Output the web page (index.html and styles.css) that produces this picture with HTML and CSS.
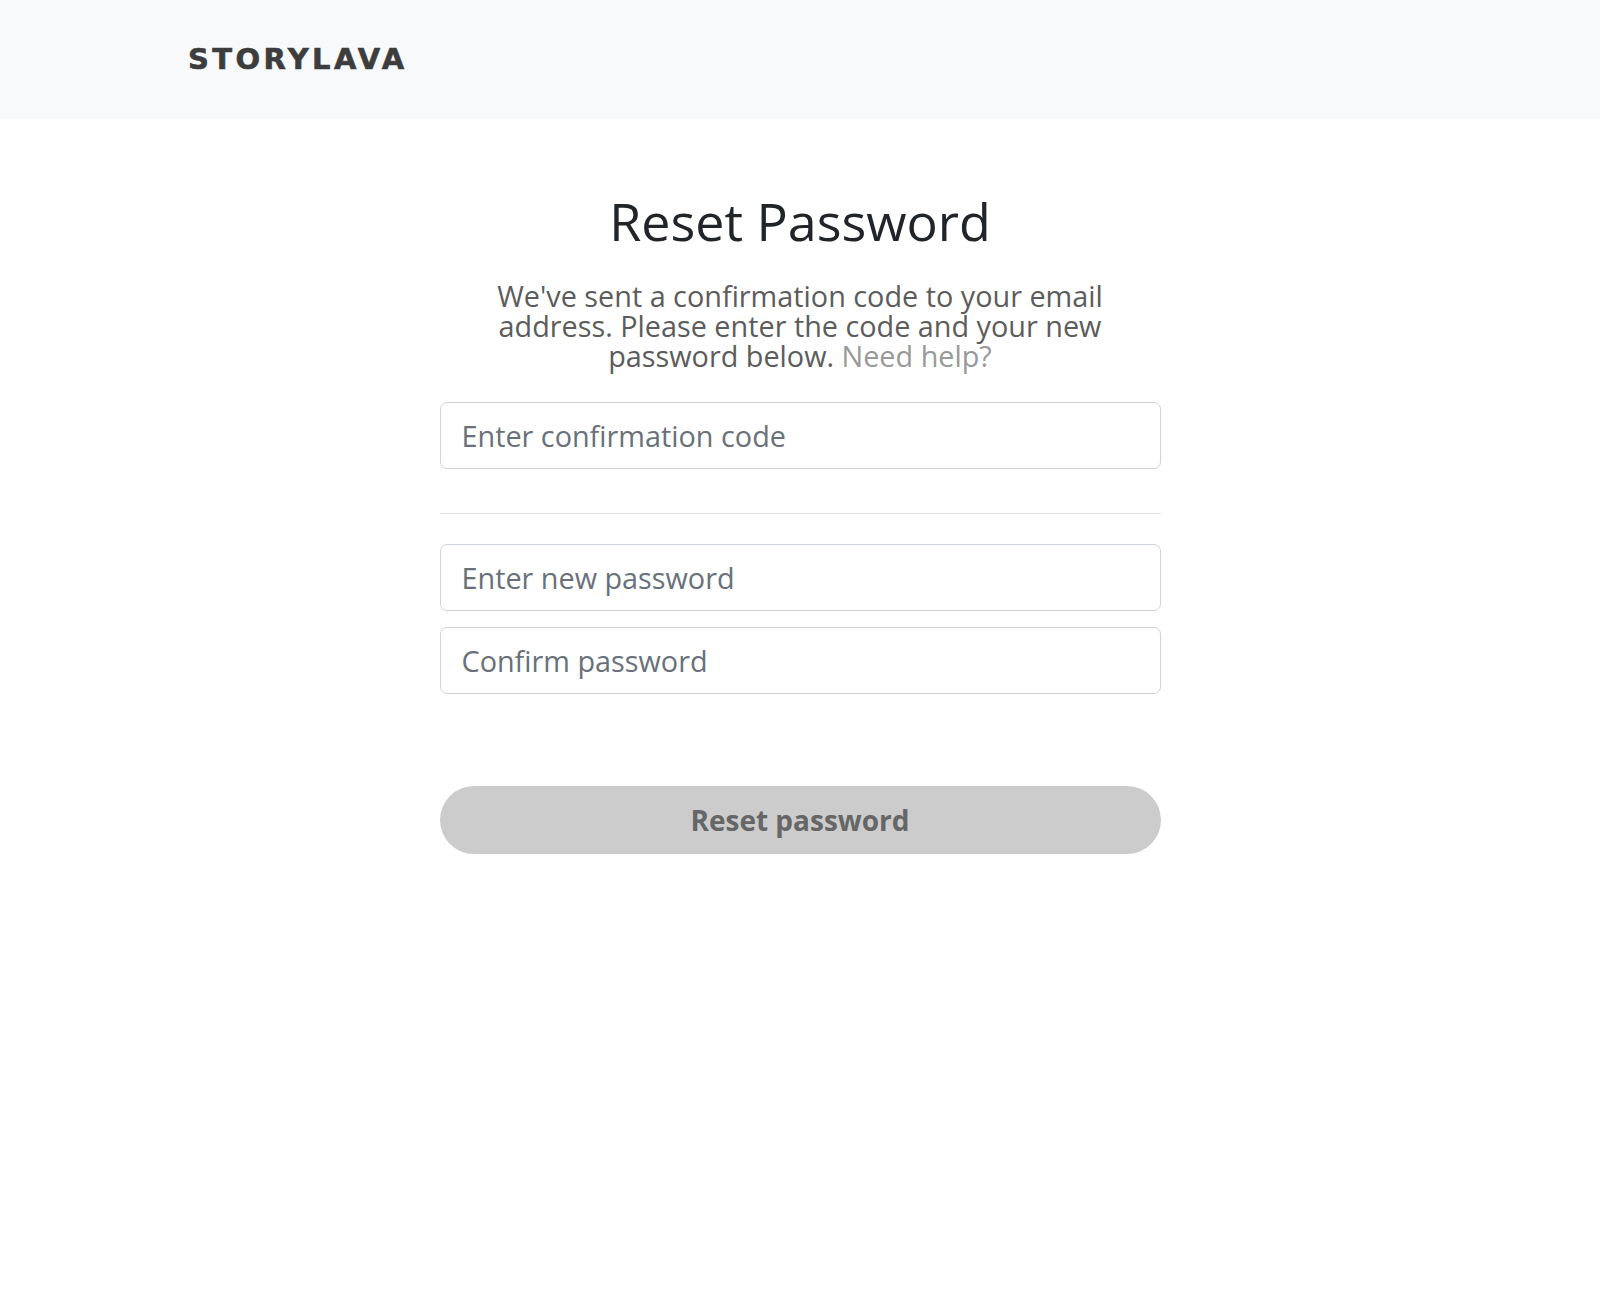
FILE: index.html
```html
<!DOCTYPE html>
<html>
	<head>
		<title>Reset Password - Storylava</title>
		<link rel="stylesheet" href="styles.css">
	</head>
	<body>
		<div class="topbar">
			<div class="logo">STORYLAVA</div>
		</div>

		<div class="box">
			<h1 class="titolo">Reset Password</h1>
			<p class="intro">We've sent a confirmation code to your email address. Please enter the code and your new password below. <a href="#" class="aiuto">Need help?</a></p>

			<input class="campo" type="text" placeholder="Enter confirmation code">
			<hr class="divisore">
			<input class="campo" type="password" placeholder="Enter new password">
			<input class="campo secondo" type="password" placeholder="Confirm password">

			<button class="pulsante" disabled>Reset password</button>
		</div>
	</body>
</html>
```

FILE: styles.css
```css
body {
	margin: 0;
	background-color: #fff;
	font-family: "Open Sans", "Noto Sans", sans-serif;
}

.topbar {
	height: 119px;
	background-color: #f8f9fa;
	display: flex;
	align-items: center;
	padding-left: 188px;
}

.logo {
	font-family: "DejaVu Sans", sans-serif;
	font-weight: bold;
	font-size: 29px;
	letter-spacing: 3.4px;
	color: #3d3d3d;
	-webkit-text-stroke: 0.6px #3d3d3d;
	margin-top: -2px;
}

.box {
	width: 721px;
	margin: 0 auto;
	text-align: center;
}

.titolo {
	margin: 71px 0 29px 0;
	font-size: 52px;
	font-weight: normal;
	line-height: 1.2;
	color: #212529;
}

.intro {
	width: 640px;
	margin: 0 auto;
	font-size: 28.8px;
	line-height: 30px;
	color: #5c5c5c;
}

.aiuto {
	color: #999;
	text-decoration: none;
}

.campo {
	display: block;
	box-sizing: border-box;
	width: 100%;
	height: 67px;
	margin-top: 31px;
	padding: 0 21px;
	border: 1px solid #ced4da;
	border-radius: 7px;
	font-family: "Open Sans", sans-serif;
	font-size: 28.8px;
	color: #495057;
}

.campo::placeholder {
	color: #68717a;
}

.divisore {
	margin: 44px 0 0 0;
	border: 0;
	border-top: 1px solid #e3e3e3;
}

.divisore + .campo {
	margin-top: 30px;
}

.secondo {
	margin-top: 16px;
}

.pulsante {
	display: block;
	width: 100%;
	height: 68px;
	margin-top: 92px;
	border: 0;
	border-radius: 34px;
	background-color: #ccc;
	color: #666;
	font-family: "Open Sans", sans-serif;
	font-weight: bold;
	font-size: 28px;
}
```
